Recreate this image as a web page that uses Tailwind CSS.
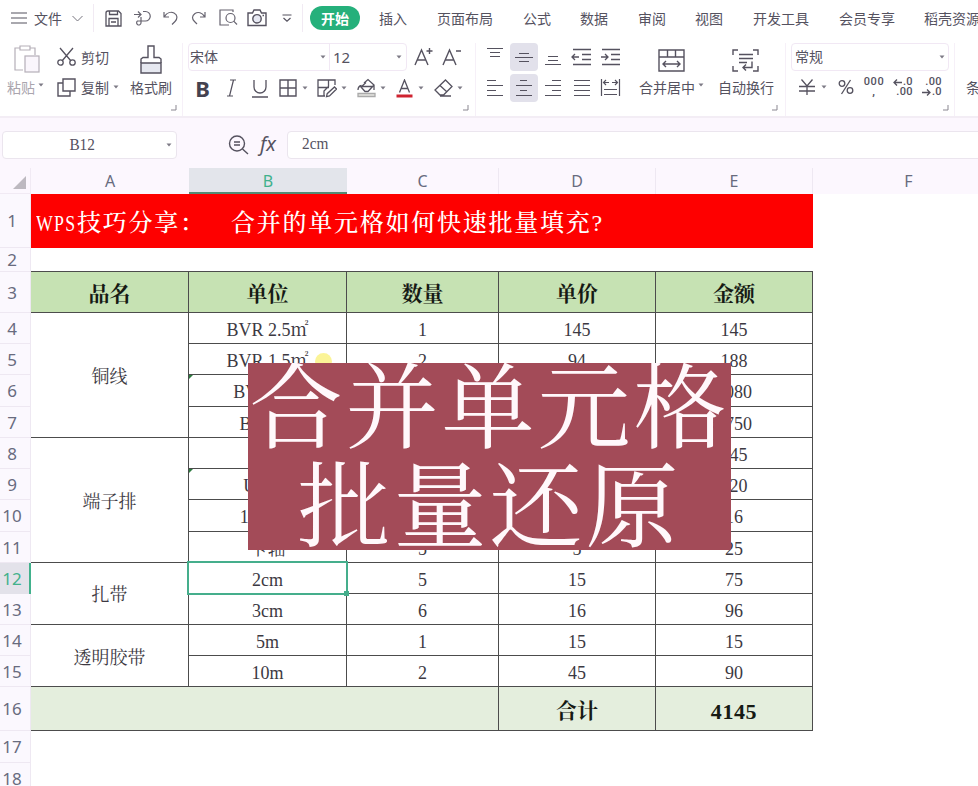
<!DOCTYPE html>
<html lang="zh-CN">
<head>
  <meta charset="UTF-8" />
  <meta name="viewport" content="width=device-width, initial-scale=1.0" />
  <title>WPS 表格</title>
  <script src="https://cdn.jsdelivr.net/npm/@tailwindcss/browser@4"></script>
</head>
<body class="w-[978px] h-[786px] overflow-hidden bg-white text-[#55525f] font-['Noto_Sans','Noto_Sans_CJK_SC',sans-serif]">

  <!-- Shared icon symbols -->
  <svg class="hidden">
    <symbol id="caret" viewBox="0 0 6 4"><path d="M.5 .5h5L3 3.6z" fill="#7d7a85" /></symbol>
    <symbol id="corner" viewBox="0 0 6 6"><path d="M5 0v5H0" fill="none" stroke="#8a8791" stroke-width="1" /></symbol>
  </svg>

  <!-- Menu bar -->
  <header class="flex h-[38px] items-center overflow-hidden pb-[2px] pl-[11px] text-[14px] leading-5 whitespace-nowrap font-['Noto_Sans_CJK_SC',sans-serif]">
    <svg class="w-4 h-4 shrink-0" viewBox="0 0 16 16" fill="none" stroke="#55525f" stroke-width="1.2"><path d="M0 3h16M0 8h16M0 13h16" /></svg>
    <span class="ml-[7px]">文件</span>
    <svg class="ml-[10px] w-[11px] h-[7px] shrink-0" viewBox="0 0 11 7" fill="none" stroke="#77747f"><path d="M.5 1l5 5 5-5" /></svg>
    <i class="ml-[10px] h-7 w-px shrink-0 bg-[#f1eaf3]"></i>
    <svg class="ml-[11px] w-[17px] h-[17px] shrink-0" viewBox="0 0 17 17" fill="none" stroke="#55525f" stroke-width="1.3"><path d="M1 3a2 2 0 0 1 2-2h10.500L16 3.500V16H1zM4.500 1v3.500h8V1M4 16V8.500h9V16M6 12h5" /></svg>
    <svg class="ml-[12px] w-[17px] h-[17px] shrink-0" viewBox="0 0 17 17" fill="none" stroke="#66636f" stroke-width="1.2"><path d="M0 4.500h7M4 1.500l3 3-3 3M9 1.500h2.500a4.700 4.700 0 0 1 0 9.500H3.500a2.200 2.200 0 1 0 3.500 2V7" /></svg>
    <svg class="ml-[12px] w-[16px] h-[16px] shrink-0" viewBox="0 0 16 16" fill="none" stroke="#66636f" stroke-width="1.2"><path d="M1 2v5h5M1.200 6.800C4 2.500 8 1.500 11 3c4 2 3.500 6 1 8.500L9 14.500" /></svg>
    <svg class="ml-[12px] w-[16px] h-[16px] shrink-0" viewBox="0 0 16 16" fill="none" stroke="#66636f" stroke-width="1.2"><path d="M14 2v5H9M13.800 6.800C11 2.500 7 1.500 4 3.500c-3.500 2.500-3 5.500-.5 8L6 14" /></svg>
    <svg class="ml-[12px] w-[19px] h-[18px] shrink-0" viewBox="0 0 19 18" fill="none" stroke="#66636f" stroke-width="1.2"><path d="M14 3V1H1v15h9" /><circle cx="11.500" cy="9" r="4.500" /><path d="M14.700 12.200l3.300 3.300" /></svg>
    <svg class="ml-[9px] w-[20px] h-[18px] shrink-0" viewBox="0 0 20 18" fill="none" stroke="#55525f" stroke-width="1.4"><path d="M1 4h4.500L7 1h6l1.500 3H19v12.500H1z" /><circle cx="10" cy="9.800" r="4.200" fill="#e6e8f2" /><path d="M15.500 6.500h1.500" /></svg>
    <svg class="ml-[15px] w-[10px] h-[9px] shrink-0" viewBox="0 0 10 9" fill="none" stroke="#55525f" stroke-width="1.2"><path d="M.5 1h9M1.500 4L5 7.300 8.500 4" /></svg>
    <i class="ml-[10px] h-7 w-px shrink-0 bg-[#f1eaf3]"></i>
    <span class="ml-[7px] flex h-[24px] w-[50px] shrink-0 items-center justify-center rounded-full bg-[#25b07b] font-bold text-white">开始</span>
    <span class="ml-[19px]">插入</span>
    <span class="ml-[30px]">页面布局</span>
    <span class="ml-[30px]">公式</span>
    <span class="ml-[29px]">数据</span>
    <span class="ml-[30px]">审阅</span>
    <span class="ml-[29px]">视图</span>
    <span class="ml-[30px]">开发工具</span>
    <span class="ml-[30px]">会员专享</span>
    <span class="ml-[29px]">稻壳资源</span>
  </header>

  <!-- Ribbon -->
  <section class="flex h-[80px] overflow-hidden border-b-2 border-[#f3edf5] pt-[5px] text-[14px] leading-5 whitespace-nowrap font-['Noto_Sans_CJK_SC',sans-serif]">

    <!-- Clipboard -->
    <div class="relative flex w-[183px] shrink-0 border-r border-[#f6f0f8] pl-[7px]">
      <div class="w-[50px] text-[#aaa5ae]">
        <svg class="ml-[7px] mt-[2px] h-[28px] w-[26px]" viewBox="0 0 26 28" fill="none" stroke="#b5afb8" stroke-width="1.2"><path d="M9 25H1V3h5M16 3h5v7M6 1h10v4H6z" /><rect x="11" y="11" width="14" height="16" fill="#faf6fc" /></svg>
        <p class="mt-[4px] flex items-center">粘贴<svg class="ml-[3px] -mt-1 h-1 w-1.5"><use href="#caret" /></svg></p>
      </div>
      <div class="w-[73px]">
        <p class="flex h-[27px] items-center"><svg class="mr-[5px] h-[19px] w-[19px]" viewBox="0 0 19 19" fill="none" stroke="#55525f" stroke-width="1.3"><path d="M3 1l11 13M16 1L5 14" /><circle cx="3.500" cy="15.500" r="2.700" /><circle cx="15.500" cy="15.500" r="2.700" /></svg>剪切</p>
        <p class="mt-[4px] flex h-[26px] items-center"><svg class="mr-[5px] h-[19px] w-[19px]" viewBox="0 0 19 19" fill="none" stroke="#55525f" stroke-width="1.4"><path d="M6 1h12v12H6zM6 5H1v13h12v-5" /></svg>复制<svg class="ml-[4px] h-1 w-1.5"><use href="#caret" /></svg></p>
      </div>
      <div>
        <svg class="ml-[10px] mt-[2px] h-[29px] w-[22px]" viewBox="0 0 22 29" fill="none" stroke="#55525f" stroke-width="1.4"><path d="M1 18h20v10H1z" fill="#e6e8f0" /><path d="M1 18v-4l2-1.500h5V1h6v11.500h5l2 1.500v4" /></svg>
        <p class="mt-[3px]">格式刷</p>
      </div>
      <svg class="absolute bottom-[5px] right-[5px] h-1.5 w-1.5"><use href="#corner" /></svg>
    </div>

    <!-- Font -->
    <div class="relative w-[293px] shrink-0 border-r border-[#f6f0f8] pl-[5px]">
      <div class="flex h-[28px] items-center">
        <div class="flex h-[28px] w-[219px] items-center rounded-sm border border-[#f1e8f4]">
          <span class="-mt-[2px] w-[131px] pl-[1px]">宋体</span>
          <svg class="h-1 w-1.5"><use href="#caret" /></svg>
          <span class="ml-[3px] flex h-full w-[71px] items-center border-l border-[#f1e8f4] pl-[3px] text-[15px] font-['Noto_Sans']">12</span>
          <svg class="-ml-[4px] h-1 w-1.5"><use href="#caret" /></svg>
        </div>
        <svg class="ml-[7px] h-[20px] w-[19px]" viewBox="0 0 19 20" fill="none" stroke="#55525f" stroke-width="1.4"><path d="M1 18L7.500 3 14 18M3.500 13h8M12.500 4h6M15.500 1v6" /></svg>
        <svg class="ml-[9px] h-[20px] w-[20px]" viewBox="0 0 20 20" fill="none" stroke="#55525f" stroke-width="1.4"><path d="M1 18L7.500 3 14 18M3.500 13h8M14 4h5" /></svg>
      </div>
      <div class="mt-[3px] flex h-[28px] items-center">
        <span class="w-[29px] text-center text-[22px] font-bold text-[#45424f] font-['Noto_Sans']">B</span>
        <svg class="ml-[9px] h-[18px] w-[11px]" viewBox="0 0 11 18" fill="none" stroke="#55525f" stroke-width="1.200"><path d="M4 1h6M1 17h6M7.500 1L3.500 17" /></svg>
        <svg class="ml-[14px] h-[19px] w-[18px]" viewBox="0 0 18 19" fill="none" stroke="#55525f" stroke-width="1.300"><path d="M3 1v7a6 6 0 0 0 12 0V1M1 18h16" /></svg>
        <svg class="ml-[10px] h-[18px] w-[18px]" viewBox="0 0 18 18" fill="none" stroke="#55525f" stroke-width="1.400"><path d="M1 1h16v16H1zM9 1v16M1 9h16" /></svg>
        <svg class="ml-[5px] h-1 w-1.5"><use href="#caret" /></svg>
        <svg class="ml-[9px] h-[19px] w-[20px]" viewBox="0 0 20 19" fill="none" stroke="#55525f" stroke-width="1.300"><path d="M8 17H1V1h17v5M1 8.500h11M11.500 1v6.500L7 12v5M17.500 8l2 2-7 7-3 .7.700-3z" /></svg>
        <svg class="ml-[4px] h-1 w-1.5"><use href="#caret" /></svg>
        <svg class="ml-[10px] h-[20px] w-[19px]" viewBox="0 0 19 20" fill="none" stroke="#55525f" stroke-width="1.300"><path d="M7 5l4-3.500L17 7l-6 6.500H8L4 9l5-4.500M4.500 7.500C2 8 1 9.500 1 12M17 7.500V12M5 8.500h11" /><path d="M1 15.500h17v3H1z" fill="#e4e4e0" stroke="#aaa" /></svg>
        <svg class="ml-[4px] h-1 w-1.5"><use href="#caret" /></svg>
        <svg class="ml-[10px] h-[19px] w-[17px]" viewBox="0 0 17 19" fill="none" stroke="#55525f" stroke-width="1.300"><path d="M3.500 13.500L8.500 1l5 12.500M5 9.500h7" /><path d="M.5 17h16" stroke="#cf2330" stroke-width="3" /></svg>
        <svg class="ml-[5px] h-1 w-1.5"><use href="#caret" /></svg>
        <svg class="ml-[10px] h-[18px] w-[20px]" viewBox="0 0 20 18" fill="none" stroke="#55525f" stroke-width="1.300"><path d="M11.500 1l6.500 6.500L9.500 16H6l-5-5zM6 6.500l7 6.500M6 17h11" /></svg>
        <svg class="ml-[3px] h-1 w-1.5"><use href="#caret" /></svg>
      </div>
      <svg class="absolute bottom-[5px] right-[6px] h-1.5 w-1.5"><use href="#corner" /></svg>
    </div>

    <!-- Alignment -->
    <div class="relative flex w-[310px] shrink-0 border-r border-[#f6f0f8] pl-[5px]">
      <div class="grid h-[59px] grid-cols-[29px_29px_29px_29px_29px] grid-rows-[28px_28px] gap-y-[3px]">
        <svg class="h-7 w-7" viewBox="0 0 28 28" stroke="#55525f" stroke-width="1.200"><path d="M6 5.500h16M9 9.500h10M9 13.500h10" /></svg>
        <svg class="h-7 w-7 rounded-sm bg-[#e2e1eb]" viewBox="0 0 28 28" stroke="#55525f" stroke-width="1.200"><path d="M9 10.500h10M5 14.500h18M9 18.500h10" /></svg>
        <svg class="h-7 w-7" viewBox="0 0 28 28" stroke="#55525f" stroke-width="1.200"><path d="M9 13.500h10M9 17.500h10M6 21.500h16" /></svg>
        <svg class="h-7 w-7" viewBox="0 0 28 28" fill="none" stroke="#55525f" stroke-width="1.300"><path d="M5 6.500h18M14 11.500h9M14 16.500h9M5 21.500h18M4 14h7M7 11l-3 3 3 3" /></svg>
        <svg class="h-7 w-7" viewBox="0 0 28 28" fill="none" stroke="#55525f" stroke-width="1.300"><path d="M5 6.500h18M14 11.500h9M14 16.500h9M5 21.500h18M4 14h7M8 11l3 3-3 3" /></svg>
        <svg class="h-7 w-7" viewBox="0 0 28 28" stroke="#55525f" stroke-width="1.200"><path d="M6 6.500h9M6 11.500h16M6 16.500h9M6 21.500h16" /></svg>
        <svg class="h-7 w-7 rounded-sm bg-[#e2e1eb]" viewBox="0 0 28 28" stroke="#55525f" stroke-width="1.200"><path d="M10 6.500h7M6 11.500h16M10 16.500h7M6 21.500h16" /></svg>
        <svg class="h-7 w-7" viewBox="0 0 28 28" stroke="#55525f" stroke-width="1.200"><path d="M13 6.500h9M6 11.500h16M13 16.500h9M6 21.500h16" /></svg>
        <svg class="h-7 w-7" viewBox="0 0 28 28" stroke="#55525f" stroke-width="1.200"><path d="M6 6.500h16M6 11.500h16M6 16.500h16M6 21.500h16" /></svg>
        <svg class="h-7 w-7" viewBox="0 0 28 28" fill="none" stroke="#55525f" stroke-width="1.200"><path d="M4.500 5v17M22.500 5v17M7 8.500h5M15 8.500h5M9 6L6.500 8.500 9 11M18 6l2.500 2.500L18 11M7 15.500h13M7 20.500h13" /></svg>
      </div>
      <div class="ml-[13px] w-[79px]">
        <svg class="ml-[19px] mt-[6px] h-[23px] w-[27px]" viewBox="0 0 27 23" fill="none" stroke="#55525f" stroke-width="1.400"><path d="M1 1h25v21H1zM1 8h25M9.500 1v7M17.500 1v7M5 15h17M8 12l-3 3 3 3M19 12l3 3-3 3" /></svg>
        <p class="mt-[5px] flex items-center">合并居中<svg class="ml-[3px] -mt-1 h-1 w-1.5"><use href="#caret" /></svg></p>
      </div>
      <div>
        <svg class="ml-[14px] mt-[6px] h-[23px] w-[27px]" viewBox="0 0 27 23" fill="none" stroke="#55525f" stroke-width="1.400"><path d="M6 1H1v5M21 1h5v5M1 17v5h5M26 17v5h-5M7 5.500h14M7 9.500h14M7 13.500h8M20 12.500v6h-9M14 15.500l-3 3 3 3" /></svg>
        <p class="mt-[5px]">自动换行</p>
      </div>
      <svg class="absolute bottom-[5px] right-[7px] h-1.5 w-1.5"><use href="#corner" /></svg>
    </div>

    <!-- Number format -->
    <div class="relative w-[169px] shrink-0 border-r border-[#f6f0f8] pl-[5px]">
      <div class="flex h-[28px] w-[158px] items-center justify-between rounded-sm border border-[#f1e8f4] pl-[3px] pr-[3px]"><span class="-mt-[2px]">常规</span><svg class="h-1 w-1.5"><use href="#caret" /></svg></div>
      <div class="mt-[2px] flex h-[28px] items-center">
        <svg class="ml-[8px] h-[16px] w-[16px]" viewBox="0 0 16 16" fill="none" stroke="#55525f" stroke-width="1.300"><path d="M2.500 .5L8 7l5.500-6.500M8 7v9M0 7.500h16M0 12h16" /></svg>
        <svg class="ml-[6px] h-1 w-1.5"><use href="#caret" /></svg>
        <svg class="ml-[11px] h-[16px] w-[16px]" viewBox="0 0 16 16" fill="none" stroke="#55525f" stroke-width="1.300"><circle cx="4" cy="4.500" r="2.800" /><circle cx="12" cy="11.500" r="2.800" /><path d="M12.500 1l-9 14" /></svg>
        <div class="ml-[9px] w-[22px] text-center text-[11px] leading-[10px] font-medium tracking-[0.6px] font-['Roboto']"><p>000</p><p class="font-bold">,</p></div>
        <div class="ml-[8px] w-[20px] text-[11px] leading-[10px] font-medium tracking-[0.4px] font-['Roboto']">
          <p class="flex items-center justify-between"><svg class="h-[7px] w-[9px]" viewBox="0 0 9 7" fill="none" stroke="#55525f" stroke-width="1.300"><path d="M1 3.500h8M4 .5l-3 3 3 3" /></svg>.0</p>
          <p class="text-right">.00</p>
        </div>
        <div class="ml-[9px] w-[20px] text-[11px] leading-[10px] font-medium tracking-[0.4px] font-['Roboto']">
          <p class="text-right">.00</p>
          <p class="flex items-center justify-between"><svg class="h-[7px] w-[9px]" viewBox="0 0 9 7" fill="none" stroke="#55525f" stroke-width="1.300"><path d="M0 3.500h8M5 .5l3 3-3 3" /></svg>.0</p>
        </div>
      </div>
      <svg class="absolute bottom-[5px] right-[5px] h-1.5 w-1.5"><use href="#corner" /></svg>
    </div>
    <div class="shrink-0 pl-[11px] pt-[34px]">条</div>
  </section>

  <!-- Name box and formula bar -->
  <section class="flex h-[50px] overflow-hidden bg-[#fcf7fe] pt-[13px] pl-[2px] font-['Liberation_Serif']">
    <div class="flex h-[28px] w-[175px] shrink-0 items-center rounded-sm border border-[#ebe5ee] bg-white text-[17px]">
      <span class="w-[163px] pr-[5px] text-center"><span class="inline-block scale-x-90">B12</span></span>
      <svg class="h-1 w-1.5"><use href="#caret" /></svg>
    </div>
    <svg class="ml-[51px] mt-[4px] h-[20px] w-[21px] shrink-0" viewBox="0 0 21 20" fill="none" stroke="#55525f" stroke-width="1.400"><circle cx="9" cy="8.500" r="7.500" /><path d="M14.500 14l5.500 5M6 7h6M6 10h6" /></svg>
    <span class="ml-[11px] mt-[-1px] w-[27px] shrink-0 text-[20px] leading-7 italic font-['Noto_Sans']">fx</span>
    <div class="h-[28px] w-[720px] shrink-0 rounded-sm border border-[#ebe5ee] bg-white pl-[14px] text-[17px] leading-6"><span class="inline-block origin-left scale-x-90">2cm</span></div>
  </section>

  <!-- Sheet -->
  <main class="relative h-[618px] overflow-hidden">
    <div class="grid w-[1004px] grid-cols-[31px_158px_158px_152px_157px_157px_191px] grid-rows-[26px_54px_24px_41px_31px_31px_32px_31px_31px_31px_32px_31px_31px_31px_31px_31px_44px_32px_31px] text-center text-[18px] leading-none text-[#3c3942] font-['Liberation_Serif','Noto_Serif_CJK_SC','Noto_Sans_CJK_SC',serif] *:flex *:items-center *:justify-center">

      <!-- Column headers -->
      <div class="border-r border-b border-[#f1eaf4] bg-[#fcf7fe]"><svg class="ml-[8px] mt-[3px] h-[13px] w-[13px]" viewBox="0 0 13 13"><path d="M13 0v13H0z" fill="#bdb9c0" /></svg></div>
      <div class="bg-[#fcf7fe] text-[16px] text-[#686b7e] font-['Noto_Sans']">A</div>
      <div class="border-b-2 border-[#538b74] bg-[#e3e5eb] pt-[2px] text-[16px] text-[#41b18c] font-['Noto_Sans']">B</div>
      <div class="border-r border-[#eee8f2] bg-[#fcf7fe] text-[16px] text-[#686b7e] font-['Noto_Sans']">C</div>
      <div class="border-r border-[#eee8f2] bg-[#fcf7fe] text-[16px] text-[#686b7e] font-['Noto_Sans']">D</div>
      <div class="border-r border-[#eee8f2] bg-[#fcf7fe] text-[16px] text-[#686b7e] font-['Noto_Sans']">E</div>
      <div class="bg-[#fcf7fe] text-[16px] text-[#686b7e] font-['Noto_Sans']">F</div>

      <!-- 1: banner -->
      <div class="border-r border-b border-[#eee8f2] bg-[#fbf8fe] pr-[6px] text-[17px] text-[#686b7e] font-['Noto_Sans']">1</div>
      <div class="col-span-5 justify-start! bg-[#fe0000] pl-[5px] pt-[3px] text-[24px] font-medium tracking-[1.75px] whitespace-pre text-white"><span class="w-[41px] text-left"><span class="inline-block origin-left scale-x-[0.74]">WPS</span></span><span class="w-[154px] text-left">技巧分享：</span><span>合并的单元格如何快速批量填充?</span></div>
      <div></div>

      <!-- 2 -->
      <div class="border-r border-b border-[#eee8f2] bg-[#fbf8fe] pr-[6px] text-[17px] text-[#686b7e] font-['Noto_Sans']">2</div>
      <div class="col-span-5 border-b border-[#4c4c4c]"></div>
      <div></div>

      <!-- 3: table header -->
      <div class="border-r border-b border-[#eee8f2] bg-[#fbf8fe] pr-[6px] text-[17px] text-[#686b7e] font-['Noto_Sans']">3</div>
      <div class="border-r border-b border-[#4c4c4c] bg-[#c6e2b3] pt-[4px] text-[21px] font-bold text-[#161a14]">品名</div>
      <div class="border-r border-b border-[#4c4c4c] bg-[#c6e2b3] pt-[4px] text-[21px] font-bold text-[#161a14]">单位</div>
      <div class="border-r border-b border-[#4c4c4c] bg-[#c6e2b3] pt-[4px] text-[21px] font-bold text-[#161a14]">数量</div>
      <div class="border-r border-b border-[#4c4c4c] bg-[#c6e2b3] pt-[4px] text-[21px] font-bold text-[#161a14]">单价</div>
      <div class="border-r border-b border-[#4c4c4c] bg-[#c6e2b3] pt-[4px] text-[21px] font-bold text-[#161a14]">金额</div>
      <div></div>

      <!-- 4 - 7 -->
      <div class="border-r border-b border-[#eee8f2] bg-[#fbf8fe] pr-[6px] text-[17px] text-[#686b7e] font-['Noto_Sans']">4</div>
      <div class="row-span-4 border-r border-b border-[#4c4c4c] pt-[3px]">铜线</div>
      <div class="border-r border-b border-[#4c4c4c] pt-[3px]">BVR 2.5㎡</div>
      <div class="border-r border-b border-[#4c4c4c] pt-[3px]">1</div>
      <div class="border-r border-b border-[#4c4c4c] pt-[3px]">145</div>
      <div class="border-r border-b border-[#4c4c4c] pt-[3px]">145</div>
      <div></div>
      <div class="border-r border-b border-[#eee8f2] bg-[#fbf8fe] pr-[6px] text-[17px] text-[#686b7e] font-['Noto_Sans']">5</div>
      <div class="border-r border-b border-[#4c4c4c] pt-[3px]">BVR 1.5㎡</div>
      <div class="border-r border-b border-[#4c4c4c] pt-[3px]">2</div>
      <div class="border-r border-b border-[#4c4c4c] pt-[3px]">94</div>
      <div class="border-r border-b border-[#4c4c4c] pt-[3px]">188</div>
      <div></div>
      <div class="border-r border-b border-[#eee8f2] bg-[#fbf8fe] pr-[6px] text-[17px] text-[#686b7e] font-['Noto_Sans']">6</div>
      <div class="relative border-r border-b border-[#4c4c4c] pt-[3px]"><svg class="absolute left-0 top-0 h-1 w-1"><path d="M0 0h4L0 4z" fill="#2c7a3f" /></svg>BVR 4㎡</div>
      <div class="border-r border-b border-[#4c4c4c]"></div>
      <div class="border-r border-b border-[#4c4c4c]"></div>
      <div class="border-r border-b border-[#4c4c4c] pt-[3px]">1080</div>
      <div></div>
      <div class="border-r border-b border-[#eee8f2] bg-[#fbf8fe] pr-[6px] text-[17px] text-[#686b7e] font-['Noto_Sans']">7</div>
      <div class="border-r border-b border-[#4c4c4c] pt-[3px]">BV 6㎡</div>
      <div class="border-r border-b border-[#4c4c4c]"></div>
      <div class="border-r border-b border-[#4c4c4c]"></div>
      <div class="border-r border-b border-[#4c4c4c] pt-[3px]">1750</div>
      <div></div>

      <!-- 8 - 11 -->
      <div class="border-r border-b border-[#eee8f2] bg-[#fbf8fe] pr-[6px] text-[17px] text-[#686b7e] font-['Noto_Sans']">8</div>
      <div class="row-span-4 border-r border-b border-[#4c4c4c] pt-[3px]">端子排</div>
      <div class="border-r border-b border-[#4c4c4c]"></div>
      <div class="border-r border-b border-[#4c4c4c]"></div>
      <div class="border-r border-b border-[#4c4c4c]"></div>
      <div class="border-r border-b border-[#4c4c4c] pt-[3px]">545</div>
      <div></div>
      <div class="border-r border-b border-[#eee8f2] bg-[#fbf8fe] pr-[6px] text-[17px] text-[#686b7e] font-['Noto_Sans']">9</div>
      <div class="relative border-r border-b border-[#4c4c4c] pt-[3px]"><svg class="absolute left-0 top-0 h-1 w-1"><path d="M0 0h4L0 4z" fill="#2c7a3f" /></svg>UK2.5</div>
      <div class="border-r border-b border-[#4c4c4c]"></div>
      <div class="border-r border-b border-[#4c4c4c]"></div>
      <div class="border-r border-b border-[#4c4c4c] pt-[3px]">120</div>
      <div></div>
      <div class="border-r border-b border-[#eee8f2] bg-[#fbf8fe] pr-[6px] text-[17px] text-[#686b7e] font-['Noto_Sans']">10</div>
      <div class="border-r border-b border-[#4c4c4c] pl-[3px] pt-[3px]">10 端子</div>
      <div class="border-r border-b border-[#4c4c4c]"></div>
      <div class="border-r border-b border-[#4c4c4c]"></div>
      <div class="border-r border-b border-[#4c4c4c] pt-[3px]">16</div>
      <div></div>
      <div class="border-r border-b border-[#eee8f2] bg-[#fbf8fe] pr-[6px] text-[17px] text-[#686b7e] font-['Noto_Sans']">11</div>
      <div class="border-r border-b border-[#4c4c4c] pt-[3px]">卡轴</div>
      <div class="border-r border-b border-[#4c4c4c] pt-[3px]">5</div>
      <div class="border-r border-b border-[#4c4c4c] pt-[3px]">5</div>
      <div class="border-r border-b border-[#4c4c4c] pt-[3px]">25</div>
      <div></div>

      <!-- 12 - 13 -->
      <div class="border-r-2 border-[#41b18c] bg-[#e3e2ea] pr-[5px] text-[17px] text-[#41b18c] font-['Noto_Sans']">12</div>
      <div class="row-span-2 border-r border-b border-[#4c4c4c] pt-[3px]">扎带</div>
      <div class="relative border-r border-b border-[#4c4c4c] pt-[3px]">2cm
        <span class="absolute -top-[2px] -left-[2px] h-[34px] w-[161px] border-2 border-[#45ae8c]"></span>
        <span class="absolute -right-[3px] -bottom-[3px] h-[5px] w-[5px] bg-[#45ae8c]"></span>
      </div>
      <div class="border-r border-b border-[#4c4c4c] pt-[3px]">5</div>
      <div class="border-r border-b border-[#4c4c4c] pt-[3px]">15</div>
      <div class="border-r border-b border-[#4c4c4c] pt-[3px]">75</div>
      <div></div>
      <div class="border-r border-b border-[#eee8f2] bg-[#fbf8fe] pr-[6px] text-[17px] text-[#686b7e] font-['Noto_Sans']">13</div>
      <div class="border-r border-b border-[#4c4c4c] pt-[3px]">3cm</div>
      <div class="border-r border-b border-[#4c4c4c] pt-[3px]">6</div>
      <div class="border-r border-b border-[#4c4c4c] pt-[3px]">16</div>
      <div class="border-r border-b border-[#4c4c4c] pt-[3px]">96</div>
      <div></div>

      <!-- 14 - 15 -->
      <div class="border-r border-b border-[#eee8f2] bg-[#fbf8fe] pr-[6px] text-[17px] text-[#686b7e] font-['Noto_Sans']">14</div>
      <div class="row-span-2 border-r border-b border-[#4c4c4c] pt-[4px]">透明胶带</div>
      <div class="border-r border-b border-[#4c4c4c] pt-[3px]">5m</div>
      <div class="border-r border-b border-[#4c4c4c] pt-[3px]">1</div>
      <div class="border-r border-b border-[#4c4c4c] pt-[3px]">15</div>
      <div class="border-r border-b border-[#4c4c4c] pt-[3px]">15</div>
      <div></div>
      <div class="border-r border-b border-[#eee8f2] bg-[#fbf8fe] pr-[6px] text-[17px] text-[#686b7e] font-['Noto_Sans']">15</div>
      <div class="border-r border-b border-[#4c4c4c] pt-[3px]">10m</div>
      <div class="border-r border-b border-[#4c4c4c] pt-[3px]">2</div>
      <div class="border-r border-b border-[#4c4c4c] pt-[3px]">45</div>
      <div class="border-r border-b border-[#4c4c4c] pt-[3px]">90</div>
      <div></div>

      <!-- 16: total -->
      <div class="border-r border-b border-[#eee8f2] bg-[#fbf8fe] pr-[6px] text-[17px] text-[#686b7e] font-['Noto_Sans']">16</div>
      <div class="col-span-3 border-r border-b border-[#4c4c4c] bg-[#e4eedd]"></div>
      <div class="border-r border-b border-[#4c4c4c] bg-[#e4eedd] pt-[6px] text-[21px] font-bold text-[#161a14]">合计</div>
      <div class="border-r border-b border-[#4c4c4c] bg-[#e4eedd] pt-[6px] text-[22px] font-bold tracking-[0.6px] text-[#161a14]">4145</div>
      <div></div>

      <!-- 17 - 18 -->
      <div class="border-r border-b border-[#eee8f2] bg-[#fbf8fe] pr-[6px] text-[17px] text-[#686b7e] font-['Noto_Sans']">17</div>
      <div class="col-span-6"></div>
      <div class="border-r border-b border-[#eee8f2] bg-[#fbf8fe] pr-[6px] text-[17px] text-[#686b7e] font-['Noto_Sans']">18</div>
      <div class="col-span-6"></div>
    </div>

    <!-- Pointer highlight and caption over the sheet -->
    <span class="absolute left-[315px] top-[185px] h-[17px] w-[17px] rounded-full bg-[#fbf38c]/90"></span>
    <div class="absolute left-[248px] top-[195px] h-[187px] w-[483px] overflow-hidden bg-[#a34b58] text-center text-[93px] leading-[99px] font-normal tracking-[3px] whitespace-nowrap text-[#fff8fb] font-['Noto_Serif_CJK_SC','Noto_Sans_CJK_SC',serif]">
      <p class="-mt-[11px]">合并单元格</p>
      <p>批量还原</p>
    </div>
  </main>
</body>
</html>
